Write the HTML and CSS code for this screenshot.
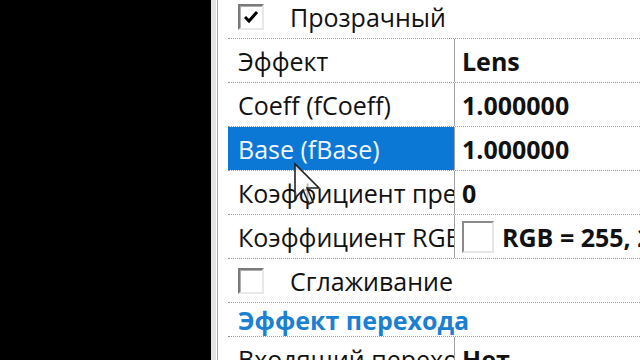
FILE: index.html
```html
<!DOCTYPE html>
<html lang="ru">
<head>
    <meta charset="UTF-8">
    <title>Свойства</title>
    <link rel="stylesheet" href="styles.css">
</head>
<body>
    <div class="panel">
        <div class="grid">
            <div class="row check-row">
                <span class="box checked">
                    <svg width="20" height="20" viewBox="0 0 20 20"><path d="M4 10 L8 14 L16 5" fill="none" stroke="#000" stroke-width="3"/></svg>
                </span>
                <span class="label">Прозрачный</span>
            </div>
            <div class="row">
                <div class="name">Эффект</div>
                <div class="value">Lens</div>
            </div>
            <div class="row">
                <div class="name">Coeff (fCoeff)</div>
                <div class="value">1.000000</div>
            </div>
            <div class="row selected">
                <div class="name">Base (fBase)</div>
                <div class="value">1.000000</div>
            </div>
            <div class="row">
                <div class="name">Коэффициент преломления</div>
                <div class="value">0</div>
            </div>
            <div class="row">
                <div class="name">Коэффициент RGB</div>
                <div class="value"><span class="swatch"></span>RGB = 255, 255, 255</div>
            </div>
            <div class="row check-row">
                <span class="box"></span>
                <span class="label">Сглаживание</span>
            </div>
            <div class="row category">Эффект перехода</div>
            <div class="row">
                <div class="name">Входящий переход</div>
                <div class="value">Нет</div>
            </div>
        </div>

        <svg class="cursor" width="30" height="46" viewBox="0 0 15 23">
            <path d="M1 1 L1 18 L5 14 L8 21 L10 20 L7 13 L13 13 Z" fill="#fff" fill-opacity="0.7" stroke="#222" stroke-width="0.8"/>
        </svg>
    </div>
</body>
</html>
```

FILE: styles.css
```css
html, body {
    margin: 0;
    height: 360px;
    overflow: hidden;
    background: #000;
}
body {
    font-family: "Open Sans", "Noto Sans", sans-serif;
    font-size: 25px;
    color: #111;
}
.panel {
    position: relative;
    margin-left: 211px;
    height: 360px;
    background: #fff;
    border-left: 5px solid #e4e4e4;
    overflow: hidden;
}
.grid {
    margin-top: -5px;
    margin-left: 1px;
    padding-left: 10px;
    border-left: 1px solid #a8a8a8;
}
.row {
    display: flex;
    align-items: center;
    height: 43px;
    border-bottom: 1px dotted #9a9a9a;
    white-space: nowrap;
}
.name {
    flex-shrink: 0;
    width: 216px;
    padding-left: 10px;
    overflow: hidden;
    align-self: stretch;
    display: flex;
    align-items: center;
    border-right: 1px solid #a0a0a0;
}
.value {
    padding-left: 7px;
    font-weight: bold;
    display: flex;
    align-items: center;
}
.selected .name {
    background: #0a78d4;
    color: #f2f6fb;
}
.check-row {
    padding-left: 10px;
}
.box {
    flex-shrink: 0;
    width: 22px;
    height: 22px;
    border: 2px solid;
    border-color: #7a7a7a #e8e8e8 #e8e8e8 #7a7a7a;
    box-shadow: inset 1px 1px 0 #b0b0b0;
    display: flex;
    align-items: center;
    justify-content: center;
    margin-right: 26px;
}
.swatch {
    flex-shrink: 0;
    width: 28px;
    height: 28px;
    border: 2px solid;
    border-color: #8a8a8a #e6e6e6 #e6e6e6 #8a8a8a;
    margin-right: 8px;
    background: #fff;
}
.category {
    height: 33px;
    padding-left: 10px;
    color: #1b7fd2;
    font-weight: bold;
}
.cursor {
    position: absolute;
    left: 77px;
    top: 162px;
}
```
